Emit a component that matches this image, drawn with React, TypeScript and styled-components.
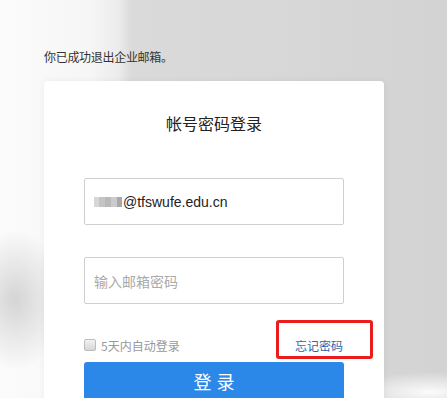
import React from 'react'
import styled, { createGlobalStyle } from 'styled-components'

const GlobalStyle = createGlobalStyle`
  html, body {
    margin: 0;
    padding: 0;
  }
  body {
    font-family: "Noto Sans CJK SC", "Liberation Sans", sans-serif;
    overflow: hidden;
  }
`

const Page = styled.div`
  width: 447px;
  height: 398px;
  box-sizing: border-box;
  padding: 49px 0 0 44px;
  overflow: hidden;
  background:
    radial-gradient(ellipse 50px 70px at 15px 300px, rgba(175, 175, 175, 0.5), rgba(175, 175, 175, 0) 100%),
    radial-gradient(ellipse 90px 20px at 430px 392px, rgba(255, 255, 255, 0.9), rgba(255, 255, 255, 0) 100%),
    radial-gradient(ellipse 60px 30px at 30px 385px, rgba(250, 250, 250, 0.8), rgba(250, 250, 250, 0) 100%),
    linear-gradient(to right, #fbfbfb 0, #f6f6f6 90px, #ececec 118px, #dadada 132px, #d8d8d8 250px, #d3d3d3 447px);
`

const Notice = styled.div`
  font-size: 12px;
  line-height: 16px;
  color: #333;
  letter-spacing: -0.3px;
`

const Card = styled.div`
  width: 340px;
  margin-top: 16px;
  box-sizing: border-box;
  padding: 31px 40px 0;
  background: #fff;
  border-radius: 4px 4px 0 0;
  height: 340px;
  box-shadow: 0 0 6px rgba(0, 0, 0, 0.06);
`

const Title = styled.h2`
  margin: 0;
  font-size: 16px;
  line-height: 22px;
  font-weight: normal;
  color: #222;
  text-align: center;
`

const Field = styled.div<{ $gap: number }>`
  margin-top: ${(p) => p.$gap}px;
  height: 47px;
  box-sizing: border-box;
  border: 1px solid #cfcfcf;
  border-radius: 2px;
  display: flex;
  align-items: center;
  padding-left: 9px;
  gap: 1px;
`

const Mosaic = styled.span`
  display: inline-block;
  width: 28px;
  height: 10px;
  margin-top: 1px;
  background: linear-gradient(
    to right,
    #d7d7d7 0,
    #d7d7d7 5px,
    #c4c4c4 5px,
    #c4c4c4 11px,
    #b9b9b9 11px,
    #b9b9b9 17px,
    #cbcbcb 17px,
    #cbcbcb 23px,
    #a9a9a9 23px
  );
`

const Value = styled.span`
  font-family: "Liberation Sans", Arial, sans-serif;
  font-size: 14px;
  color: #222;
`

const Placeholder = styled.span`
  font-size: 14px;
  color: #aaa;
`

const Options = styled.div`
  margin-top: 31px;
  height: 20px;
  display: flex;
  align-items: center;
  justify-content: space-between;
  font-size: 12px;
`

const Remember = styled.label`
  display: flex;
  align-items: center;
  gap: 5px;
  color: #999;
`

const Box = styled.span`
  width: 10px;
  height: 10px;
  border: 1px solid #bdbdbd;
  border-radius: 2px;
  background: linear-gradient(#f2f2f2, #d6d6d6);
`

const Forget = styled.a`
  position: relative;
  color: #2f64ab;
  text-decoration: none;
  margin-right: 1px;
`

const Highlight = styled.span`
  position: absolute;
  left: -19px;
  right: -30px;
  top: -17px;
  bottom: -5px;
  border: 3px solid #ea1c1c;
  border-radius: 3px;
`

const Submit = styled.button`
  margin-top: 7px;
  width: 100%;
  height: 38px;
  border: none;
  border-radius: 3px;
  background: #2b88e8;
  color: #fff;
  font-family: "Noto Sans CJK SC", sans-serif;
  font-size: 18px;
  letter-spacing: 5px;
  text-indent: 5px;
  padding: 0;
`

export default function App() {
  return (
    <>
      <GlobalStyle />
      <Page>
        <Notice>你已成功退出企业邮箱。</Notice>
        <Card>
          <Title>帐号密码登录</Title>
          <Field $gap={44}>
            <Mosaic />
            <Value>@tfswufe.edu.cn</Value>
          </Field>
          <Field $gap={32}>
            <Placeholder>输入邮箱密码</Placeholder>
          </Field>
          <Options>
            <Remember>
              <Box />
              5天内自动登录
            </Remember>
            <Forget href="#">
              忘记密码
              <Highlight />
            </Forget>
          </Options>
          <Submit>登录</Submit>
        </Card>
      </Page>
    </>
  )
}
